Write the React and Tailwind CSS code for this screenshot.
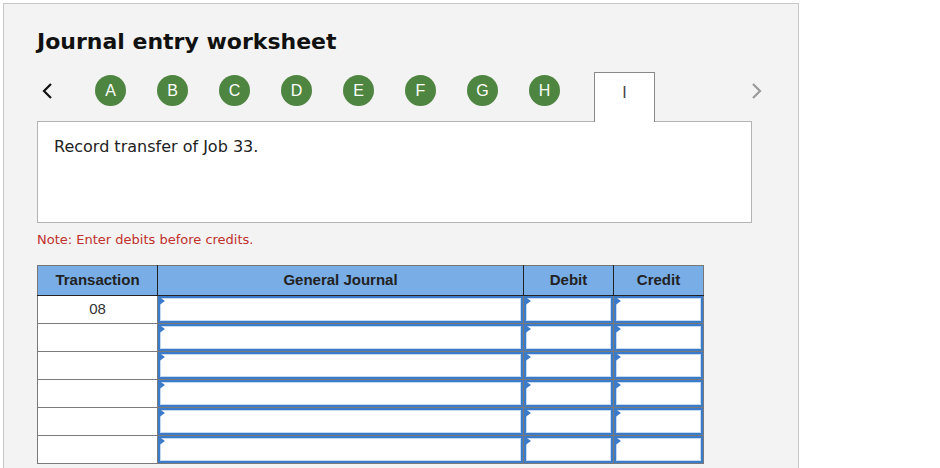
import React from "react";

const steps = ["A", "B", "C", "D", "E", "F", "G", "H"];
const rows = ["08", "", "", "", "", ""];

const InputCell = () => (
  <td className="p-0 border border-[#7a7a7a] align-top">
    <div className="relative h-[27px] bg-white border-2 border-[#3b7bc8] shadow-[inset_0_0_0_1px_#c4d9f2]">
      <svg className="absolute -left-[2px] -top-[2px]" width="7" height="10" viewBox="0 0 7 10">
        <path d="M0 0 L7 5 L0 10 Z" fill="#3b7bc8" />
      </svg>
    </div>
  </td>
);

export default function App() {
  return (
    <div className="w-[940px] h-[468px] bg-white overflow-hidden">
      <div className="ml-[3px] mt-[3px] w-[796px] h-[480px] border border-[#c6c6c6] bg-[#f3f3f3] pl-[33px] pt-[24px]">
        <h1 className="text-[22px] leading-[28px] font-bold text-[#111] font-['DejaVu_Sans',sans-serif]">
          Journal entry worksheet
        </h1>

        <div className="mt-[16px] flex items-start h-[49px] w-[727px] font-['Liberation_Sans',Arial,sans-serif]">
          <div className="w-[58px] h-[37px] flex items-center pl-[3px]">
            <svg width="14" height="18" viewBox="0 0 14 18">
              <path d="M11 2 L4 9 L11 16" fill="none" stroke="#111" strokeWidth="2.2" />
            </svg>
          </div>
          <div className="flex gap-[31px] mt-[3px]">
            {steps.map((s) => (
              <div
                key={s}
                className="w-[31px] h-[31px] rounded-full bg-[#4e8540] text-white text-[16px] flex items-center justify-center"
              >
                {s}
              </div>
            ))}
          </div>
          <div className="relative z-10 ml-[34px] w-[61px] h-[50px] bg-white border border-b-0 border-[#888] flex justify-center pt-[8px] text-[16px] text-[#444]">
            I
          </div>
          <div className="ml-auto h-[37px] flex items-center">
            <svg width="14" height="18" viewBox="0 0 14 18">
              <path d="M3 2 L10 9 L3 16" fill="none" stroke="#9a9a9a" strokeWidth="2.2" />
            </svg>
          </div>
        </div>

        <div className="w-[715px] h-[102px] bg-white border border-[#b4b4b4] pl-[16px] pt-[15px]">
          <p className="text-[16px] leading-[20px] text-[#222] font-['DejaVu_Sans',sans-serif]">
            Record transfer of Job 33.
          </p>
        </div>

        <p className="mt-[9px] text-[13px] leading-[16px] text-[#c0302c] font-['DejaVu_Sans',sans-serif]">
          Note: Enter debits before credits.
        </p>

        <table className="mt-[17px] border-collapse table-fixed w-[667px] font-['Liberation_Sans',Arial,sans-serif]">
          <colgroup>
            <col className="w-[120px]" />
            <col className="w-[366px]" />
            <col className="w-[90px]" />
            <col className="w-[90px]" />
          </colgroup>
          <thead>
            <tr className="h-[30px] bg-[#78ade6] text-[15px] font-bold text-[#222]">
              <th className="border border-[#222] border-t-[#777] border-l-[#777] font-bold">Transaction</th>
              <th className="border border-[#222] border-t-[#777] font-bold">General Journal</th>
              <th className="border border-[#222] border-t-[#777] font-bold">Debit</th>
              <th className="border border-[#222] border-t-[#777] border-r-[#777] font-bold">Credit</th>
            </tr>
          </thead>
          <tbody>
            {rows.map((r, i) => (
              <tr key={i} className="h-[28px]">
                <td className="border border-[#7a7a7a] bg-white text-center text-[15px] text-[#333] p-0">{r}</td>
                <InputCell />
                <InputCell />
                <InputCell />
              </tr>
            ))}
          </tbody>
        </table>
      </div>
    </div>
  );
}
